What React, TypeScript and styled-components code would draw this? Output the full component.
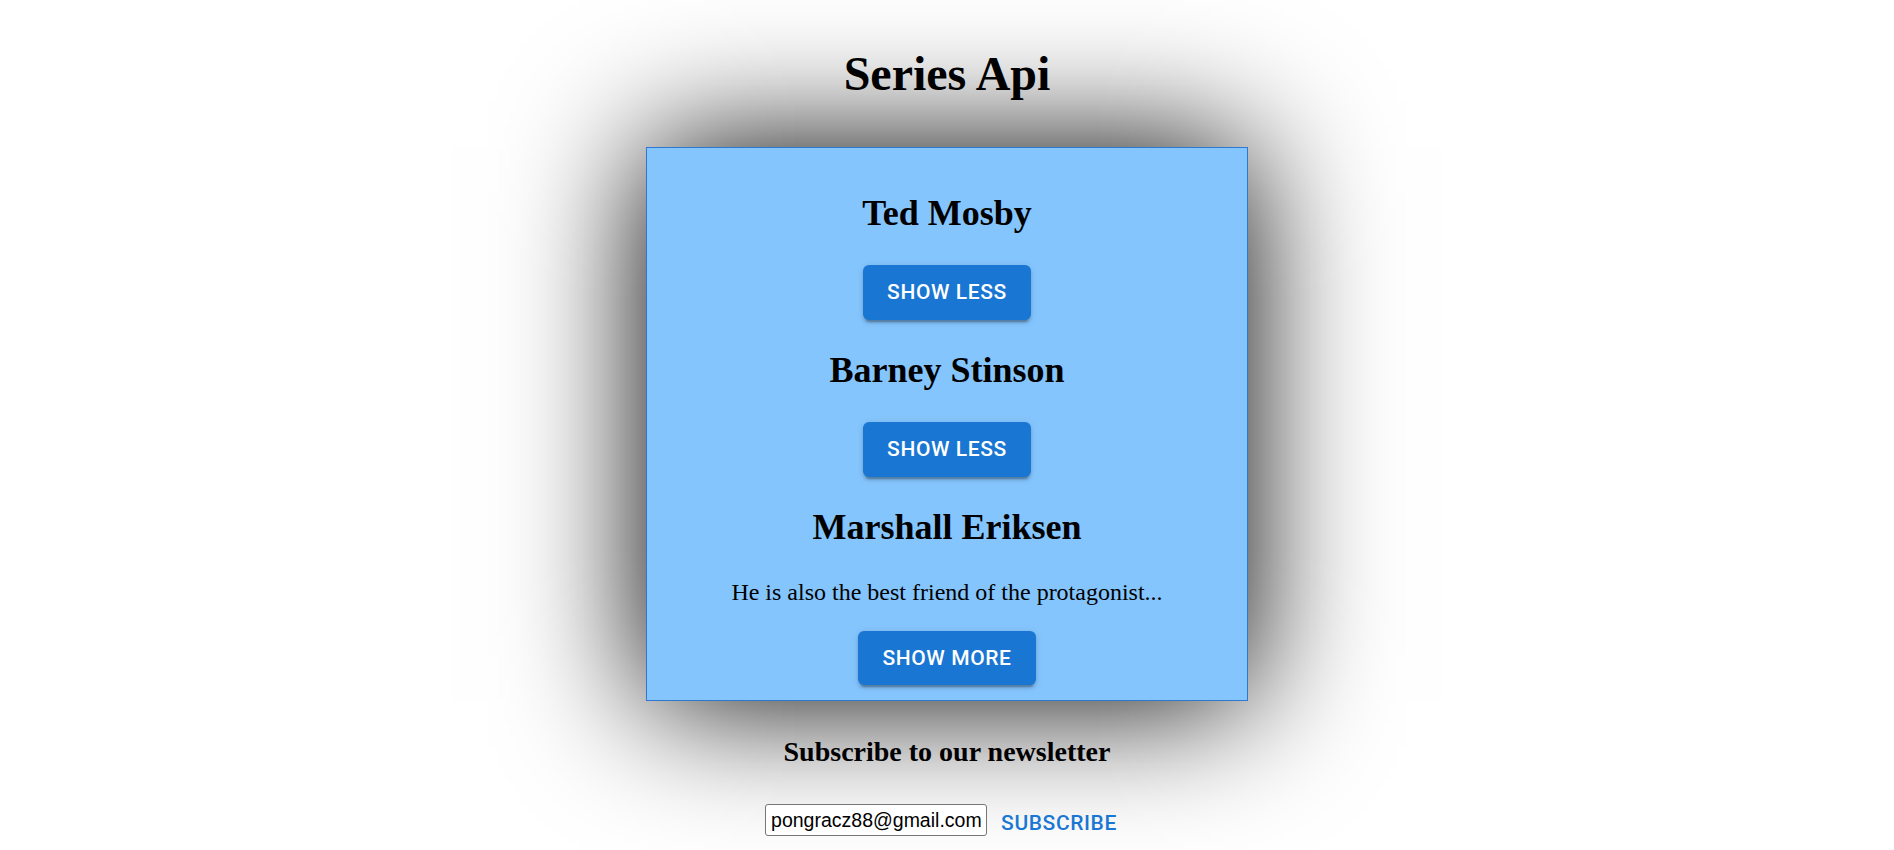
import React, { useState } from 'react'
import styled, { createGlobalStyle } from 'styled-components'

const GlobalStyle = createGlobalStyle`
  html, body {
    margin: 0;
    padding: 0;
    background: #fff;
    overflow: hidden;
  }
  body {
    font-family: "Liberation Serif", "Times New Roman", serif;
    color: #000;
  }
`

const Page = styled.div`
  display: flex;
  flex-direction: column;
  align-items: center;
  padding-top: 46px;
`

const Title = styled.h1`
  margin: 0;
  font-size: 48px;
  line-height: 55px;
  font-weight: bold;
`

const Card = styled.div`
  margin-top: 46px;
  width: 600px;
  padding: 15px 0;
  background: #85c5fe;
  border: 1px solid #2f78d0;
  box-shadow: 0 0 130px #000;
  display: flex;
  flex-direction: column;
  align-items: center;
`

const Item = styled.div`
  display: flex;
  flex-direction: column;
  align-items: center;

  h2 + button {
    margin-top: 31px;
  }
  p + button {
    margin-top: 25px;
  }
`

const Name = styled.h2`
  margin: 30px 0 0;
  font-size: 36px;
  line-height: 41px;
  font-weight: bold;
`

const Description = styled.p`
  margin: 30px 0 0;
  font-size: 24px;
  line-height: 28px;
`

const ContainedButton = styled.button`
  font-family: Roboto, "Liberation Sans", sans-serif;
  font-weight: 500;
  font-size: 21px;
  line-height: 1.75;
  letter-spacing: 0.6px;
  text-transform: uppercase;
  color: #fff;
  background: #1976d2;
  border: 0;
  border-radius: 6px;
  padding: 9px 24px;
  min-width: 96px;
  cursor: pointer;
  box-shadow: 0 4.5px 1.5px -3px rgba(0, 0, 0, 0.2),
    0 3px 3px 0 rgba(0, 0, 0, 0.14), 0 1.5px 7.5px 0 rgba(0, 0, 0, 0.12);
`

const NewsletterTitle = styled.h3`
  margin: 35px 0 0;
  font-size: 28px;
  line-height: 32px;
  font-weight: bold;
`

const SubscribeRow = styled.div`
  margin-top: 28px;
  display: flex;
  align-items: flex-start;
  gap: 2px;
`

const EmailInput = styled.input`
  box-sizing: border-box;
  margin-top: 8px;
  width: 222px;
  height: 32px;
  padding: 0 5px;
  border: 1px solid #767676;
  border-radius: 3px;
  background: #fff;
  font-family: "Liberation Sans", Arial, sans-serif;
  font-size: 19.5px;
  color: #000;
  outline: none;
`

const TextButton = styled.button`
  font-family: Roboto, "Liberation Sans", sans-serif;
  font-weight: 500;
  font-size: 21px;
  line-height: 1.75;
  letter-spacing: 0.6px;
  text-transform: uppercase;
  color: #1976d2;
  background: transparent;
  border: 0;
  border-radius: 6px;
  padding: 9px 12px;
  cursor: pointer;
`

interface Character {
  name: string
  description: string
}

const characters: Character[] = [
  { name: 'Ted Mosby', description: 'He is the protagonist of the series...' },
  { name: 'Barney Stinson', description: 'He is the best friend of Ted...' },
  {
    name: 'Marshall Eriksen',
    description: 'He is also the best friend of the protagonist...'
  }
]

const CharacterItem = ({ character, open }: { character: Character; open: boolean }) => {
  const [isOpen, setOpen] = useState(open)
  return (
    <Item>
      <Name>{character.name}</Name>
      {!isOpen && <Description>{character.description}</Description>}
      <ContainedButton onClick={() => setOpen(!isOpen)}>
        {isOpen ? 'Show less' : 'Show more'}
      </ContainedButton>
    </Item>
  )
}

export default function App() {
  const [email, setEmail] = useState('pongracz88@gmail.com')

  return (
    <>
      <GlobalStyle />
      <Page>
        <Title>Series Api</Title>
        <Card>
          {characters.map((c, i) => (
            <CharacterItem key={c.name} character={c} open={i < 2} />
          ))}
        </Card>
        <NewsletterTitle>Subscribe to our newsletter</NewsletterTitle>
        <SubscribeRow>
          <EmailInput value={email} onChange={e => setEmail(e.target.value)} />
          <TextButton>Subscribe</TextButton>
        </SubscribeRow>
      </Page>
    </>
  )
}
